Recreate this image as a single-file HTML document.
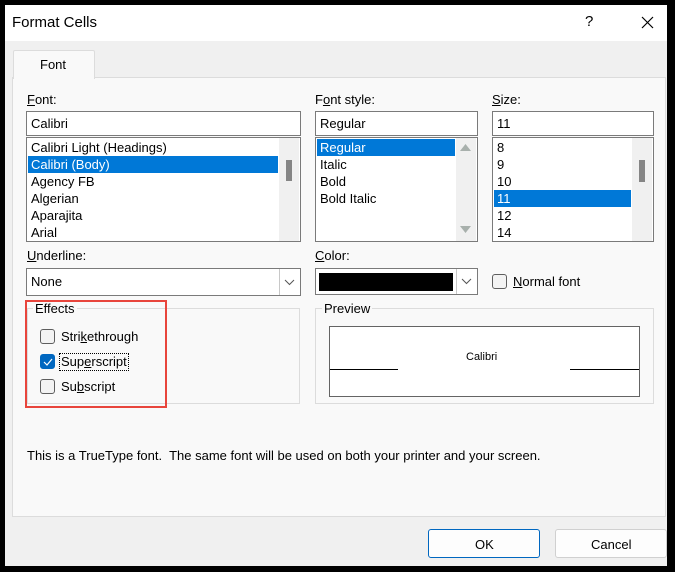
<!DOCTYPE html>
<html><head><meta charset="utf-8"><style>
*{margin:0;padding:0;box-sizing:border-box}
body{width:675px;height:572px;background:#000;position:relative;overflow:hidden;font-family:"Liberation Sans",sans-serif;font-size:13px;color:#000}
.a{position:absolute}
.t{position:absolute;white-space:nowrap;line-height:14px}
.box{position:absolute;background:#fff;border:1px solid #7a7a7a}
.sel{position:absolute;background:#0078d7;color:#fff}
.grp{position:absolute;border:1px solid #dcdcdc}
.cb{position:absolute;width:15px;height:15px;border:1px solid #5e5e5e;border-radius:3px;background:#f3f3f3}
u{text-decoration:underline}
</style></head><body>
<div class="a" style="left:5px;top:5px;width:662px;height:561px;background:#f0f0f0"></div>
<div class="a" style="left:5px;top:5px;width:662px;height:36px;background:#fff"></div>
<div class="t" style="left:12px;top:14px;font-size:15px;line-height:18px">Format Cells</div>
<div class="t" style="left:585px;top:13px;font-size:15px;line-height:18px">?</div>
<svg class="a" style="left:641px;top:16px" width="13" height="13"><path d="M1 1L12 12M12 1L1 12" stroke="#000" stroke-width="1.2"/></svg>

<div class="a" style="left:12px;top:77px;width:654px;height:440px;background:#f9f9f9;border:1px solid #dcdcdc"></div>
<div class="a" style="left:13px;top:50px;width:82px;height:29px;background:#f9f9f9;border:1px solid #dcdcdc;border-bottom:none;border-radius:2px 2px 0 0"></div>
<div class="t" style="left:40px;top:58px">Font</div>

<div class="t" style="left:27px;top:93px"><u>F</u>ont:</div>
<div class="box" style="left:26px;top:111px;width:275px;height:25px"></div>
<div class="t" style="left:31px;top:117px">Calibri</div>
<div class="box" style="left:26px;top:137px;width:275px;height:105px"></div>
<div class="a" style="left:279px;top:138px;width:20px;height:103px;background:#f0f0f0"></div>
<div class="a" style="left:286px;top:160px;width:6px;height:21px;background:#858585"></div>
<div class="sel" style="left:28px;top:156px;width:250px;height:17px"></div>
<div class="t" style="left:31px;top:141px">Calibri Light (Headings)</div>
<div class="t" style="left:31px;top:158px;color:#fff">Calibri (Body)</div>
<div class="t" style="left:31px;top:175px">Agency FB</div>
<div class="t" style="left:31px;top:192px">Algerian</div>
<div class="t" style="left:31px;top:209px">Aparajita</div>
<div class="t" style="left:31px;top:226px">Arial</div>

<div class="t" style="left:315px;top:93px">F<u>o</u>nt style:</div>
<div class="box" style="left:315px;top:111px;width:163px;height:25px"></div>
<div class="t" style="left:320px;top:117px">Regular</div>
<div class="box" style="left:315px;top:137px;width:163px;height:105px"></div>
<div class="a" style="left:456px;top:138px;width:20px;height:103px;background:#f0f0f0"></div>
<svg class="a" style="left:460px;top:144px" width="11" height="8"><path d="M5.5 0L11 7H0Z" fill="#a8b0ac"/></svg>
<svg class="a" style="left:460px;top:226px" width="11" height="8"><path d="M5.5 7L11 0H0Z" fill="#a8b0ac"/></svg>
<div class="sel" style="left:317px;top:139px;width:138px;height:17px"></div>
<div class="t" style="left:320px;top:141px;color:#fff">Regular</div>
<div class="t" style="left:320px;top:158px">Italic</div>
<div class="t" style="left:320px;top:175px">Bold</div>
<div class="t" style="left:320px;top:192px">Bold Italic</div>

<div class="t" style="left:492px;top:93px"><u>S</u>ize:</div>
<div class="box" style="left:492px;top:111px;width:162px;height:25px"></div>
<div class="t" style="left:497px;top:117px">11</div>
<div class="box" style="left:492px;top:137px;width:162px;height:105px"></div>
<div class="a" style="left:632px;top:138px;width:20px;height:103px;background:#f0f0f0"></div>
<div class="a" style="left:639px;top:160px;width:6px;height:22px;background:#858585"></div>
<div class="sel" style="left:494px;top:190px;width:137px;height:17px"></div>
<div class="t" style="left:497px;top:141px">8</div>
<div class="t" style="left:497px;top:158px">9</div>
<div class="t" style="left:497px;top:175px">10</div>
<div class="t" style="left:497px;top:192px;color:#fff">11</div>
<div class="t" style="left:497px;top:209px">12</div>
<div class="t" style="left:497px;top:226px">14</div>

<div class="t" style="left:27px;top:249px"><u>U</u>nderline:</div>
<div class="box" style="left:26px;top:268px;width:275px;height:28px"></div>
<div class="a" style="left:279px;top:269px;width:21px;height:26px;border-left:1px solid #c8c8c8;background:#fff"></div>
<svg class="a" style="left:284px;top:279px" width="11" height="7"><path d="M1 1L5.5 5.5L10 1" stroke="#555" fill="none"/></svg>
<div class="t" style="left:31px;top:275px">None</div>

<div class="t" style="left:315px;top:249px"><u>C</u>olor:</div>
<div class="box" style="left:315px;top:268px;width:163px;height:27px"></div>
<div class="a" style="left:319px;top:273px;width:134px;height:18px;background:#000"></div>
<div class="a" style="left:456px;top:269px;width:21px;height:25px;border-left:1px solid #c8c8c8;background:#fff"></div>
<svg class="a" style="left:461px;top:278px" width="11" height="7"><path d="M1 1L5.5 5.5L10 1" stroke="#555" fill="none"/></svg>
<div class="cb" style="left:492px;top:274px"></div>
<div class="t" style="left:513px;top:275px"><u>N</u>ormal font</div>

<div class="grp" style="left:27px;top:308px;width:273px;height:96px"></div>
<div class="t" style="left:33px;top:302px;background:#f9f9f9;padding:0 2px">Effects</div>
<div class="a" style="left:25px;top:300px;width:142px;height:108px;border:2px solid #e8453c"></div>
<div class="cb" style="left:40px;top:329px"></div>
<div class="t" style="left:61px;top:330px">Stri<u>k</u>ethrough</div>
<div class="cb" style="left:40px;top:354px;background:#0067c0;border-color:#0067c0"></div>
<svg class="a" style="left:43px;top:358px" width="10" height="8"><path d="M1 4L4 7L9 1" stroke="#fff" fill="none" stroke-width="1.2"/></svg>
<div class="a" style="left:59px;top:353px;width:70px;height:18px;border:1px dotted #000"></div>
<div class="t" style="left:61px;top:355px">Sup<u>e</u>rscript</div>
<div class="cb" style="left:40px;top:379px"></div>
<div class="t" style="left:61px;top:380px">Su<u>b</u>script</div>

<div class="grp" style="left:315px;top:308px;width:339px;height:96px"></div>
<div class="t" style="left:322px;top:302px;background:#f9f9f9;padding:0 2px">Preview</div>
<div class="a" style="left:329px;top:326px;width:311px;height:71px;background:#fff;border:1px solid #646464"></div>
<div class="a" style="left:330px;top:369px;width:68px;height:1px;background:#000"></div>
<div class="a" style="left:570px;top:369px;width:69px;height:1px;background:#000"></div>
<div class="t" style="left:466px;top:350px;font-size:11px">Calibri</div>

<div class="t" style="left:27px;top:449px">This is a TrueType font.&nbsp; The same font will be used on both your printer and your screen.</div>

<div class="a" style="left:428px;top:529px;width:112px;height:29px;background:#fdfdfd;border:1px solid #0067c0;border-radius:3px"></div>
<div class="t" style="left:475px;top:538px">OK</div>
<div class="a" style="left:555px;top:529px;width:112px;height:29px;background:#fdfdfd;border:1px solid #d0d0d0;border-radius:3px"></div>
<div class="t" style="left:591px;top:538px">Cancel</div>
</body></html>
